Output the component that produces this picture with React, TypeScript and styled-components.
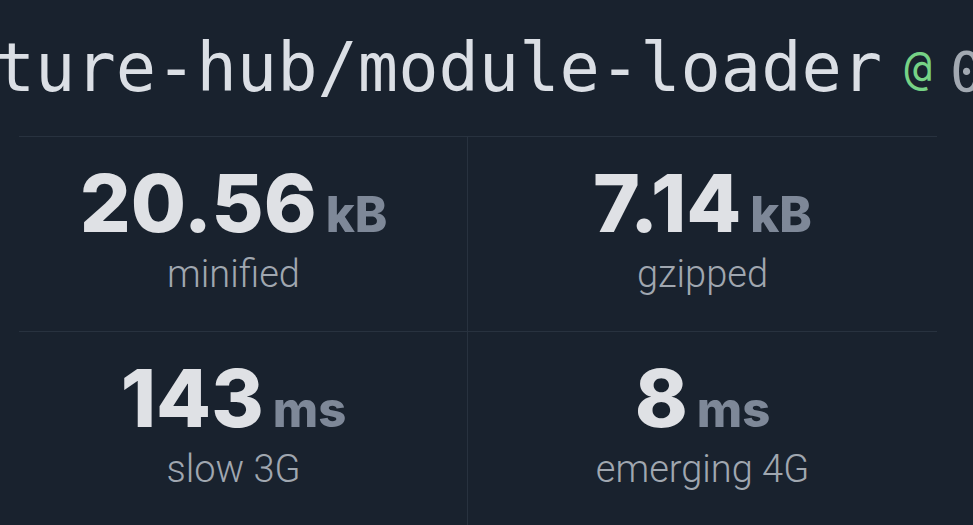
import React from 'react'
import styled, { createGlobalStyle } from 'styled-components'

const GlobalStyle = createGlobalStyle`
html, body {
    margin:0;
    padding:0;
    background-color:#19222e;
}
body {
    width:973px;
    height:525px;
    overflow:hidden;
}
`

const StyledPage = styled.div`
width:973px;
height:525px;
overflow:hidden;
background-color:#19222e;
`

const StyledTitle = styled.h1`
display:flex;
align-items:baseline;
justify-content:center;
white-space:nowrap;
margin:0;
padding:35px 0 0 9px;
height:101px;
font-family:"DejaVu Sans Mono", "Liberation Mono", monospace;
font-weight:400;
font-size:67px;
line-height:1;
color:#dbdfe5;
`

const StyledAt = styled.span`
align-self:flex-start;
margin:10px 18px 0 22px;
color:#76d286;
font-size:46px;
`

const StyledVersion = styled.span`
color:#a2a9b2;
font-size:55px;
`

const StyledStats = styled.div`
width:937px;
`

const StyledDivider = styled.div`
height:1px;
margin-left:19px;
background-color:#28323f;
`

const StyledRow = styled.div`
display:grid;
grid-template-columns:468px 469px;
height:194px;
`

const StyledStat = styled.div<{ $divider?: boolean }>`
display:flex;
flex-direction:column;
align-items:center;
padding-top:26px;
border-right:${props => props.$divider ? '1px solid #28323f' : 'none'};
`

const StyledValue = styled.div`
font-family:Inter, "Noto Sans", sans-serif;
font-size:80px;
font-weight:800;
line-height:1;
color:#dfe1e5;
`

const StyledUnit = styled.span`
margin-left:9px;
font-size:49px;
font-weight:800;
color:#7e8898;
`

const StyledLabel = styled.div`
margin-top:12px;
font-family:Roboto, Inter, sans-serif;
font-size:38px;
font-weight:300;
line-height:1;
color:#a0a7b0;
`

type Stat = { value: string, unit: string, label: string }

const rows: Stat[][] = [
    [
        { value: '20.56', unit: 'kB', label: 'minified' },
        { value: '7.14', unit: 'kB', label: 'gzipped' },
    ],
    [
        { value: '143', unit: 'ms', label: 'slow 3G' },
        { value: '8', unit: 'ms', label: 'emerging 4G' },
    ],
]

const App = () => {
    return (
        <>
            <GlobalStyle />
            <StyledPage>
                <StyledTitle>
                    <span>@feature-hub/module-loader</span>
                    <StyledAt>@</StyledAt>
                    <StyledVersion>0.30.1</StyledVersion>
                </StyledTitle>
                <StyledStats>
                    {rows.map((row, i) => (
                        <React.Fragment key={i}>
                            <StyledDivider />
                            <StyledRow>
                                {row.map((stat, j) => (
                                    <StyledStat key={stat.label} $divider={j === 0}>
                                        <StyledValue>
                                            {stat.value}
                                            <StyledUnit>{stat.unit}</StyledUnit>
                                        </StyledValue>
                                        <StyledLabel>{stat.label}</StyledLabel>
                                    </StyledStat>
                                ))}
                            </StyledRow>
                        </React.Fragment>
                    ))}
                </StyledStats>
            </StyledPage>
        </>
    )
}

export default App
